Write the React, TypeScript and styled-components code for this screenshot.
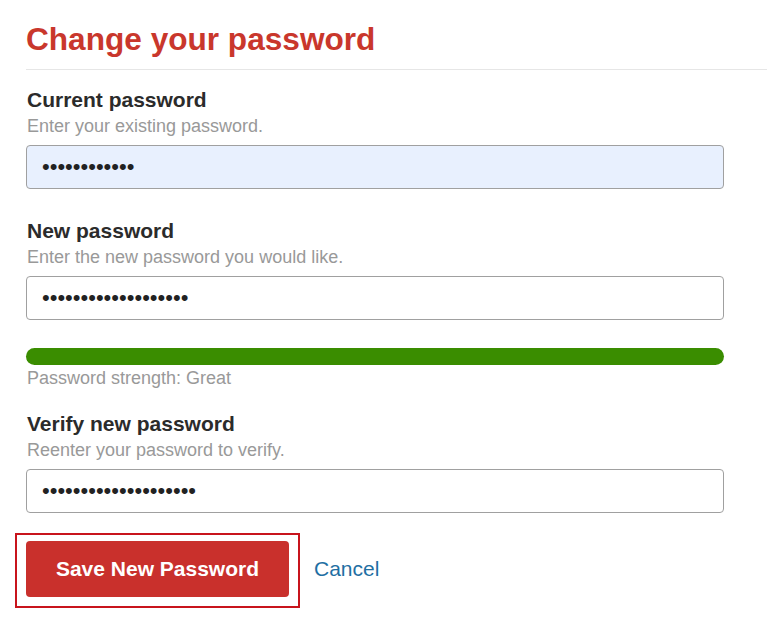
import React from 'react';
import styled, { createGlobalStyle } from 'styled-components';

const GlobalStyle = createGlobalStyle`
  body {
    margin: 0;
    background: #fff;
    font-family: 'Liberation Sans', Arial, sans-serif;
  }
`;

const Page = styled.div`
  padding: 21px 0 0 26px;
`;

const Title = styled.h1`
  margin: 0;
  padding: 0 0 12px 0;
  font-size: 31.6px;
  line-height: 36px;
  font-weight: 700;
  color: #c9372c;
  border-bottom: 1px solid #e6e6e6;
`;

const Form = styled.form`
  padding-right: 43px;
  margin-top: 18px;
`;

const Field = styled.div<{ $gap?: number }>`
  margin-bottom: ${({ $gap }) => ($gap ?? 30)}px;
`;

const Label = styled.label`
  display: block;
  font-size: 21px;
  line-height: 24px;
  font-weight: 700;
  color: #2b2b2b;
  padding-left: 1px;
`;

const Hint = styled.div`
  font-size: 18px;
  line-height: 22px;
  color: #999;
  margin: 3px 0 8px;
  padding-left: 1px;
`;

const Input = styled.input<{ $filled?: boolean }>`
  display: block;
  box-sizing: border-box;
  width: 100%;
  height: 44px;
  padding: 0 15px;
  border: 1px solid #a0a0a0;
  border-radius: 4px;
  background: ${({ $filled }) => ($filled ? '#e8f0fe' : '#fff')};
  font-family: 'Liberation Sans', Arial, sans-serif;
  font-size: 22px;
  color: #222;
  outline: none;
`;

const StrengthBar = styled.div`
  height: 17px;
  border-radius: 9px;
  background: #3a8d00;
`;

const StrengthText = styled.div`
  font-size: 18px;
  line-height: 22px;
  color: #999;
  margin: 2px 0 23px 1px;
`;

const Actions = styled.div`
  display: flex;
  align-items: center;
  gap: 14px;
  margin: 20px 0 0 -11px;
`;

const FocusRing = styled.div`
  border: 2px solid #c8141c;
  padding: 6px 9px 9px;
`;

const SaveButton = styled.button`
  display: block;
  height: 56px;
  width: 263px;
  border: none;
  border-radius: 4px;
  background: #c9302c;
  color: #fff;
  font-family: 'Liberation Sans', Arial, sans-serif;
  font-size: 21px;
  font-weight: 700;
  cursor: pointer;
`;

const CancelLink = styled.a`
  font-size: 21px;
  color: #1f6fa3;
  text-decoration: none;
  margin-bottom: 4px;
`;

export default function App() {
  return (
    <>
      <GlobalStyle />
      <Page>
        <Title>Change your password</Title>
        <Form onSubmit={(e) => e.preventDefault()}>
          <Field>
            <Label>Current password</Label>
            <Hint>Enter your existing password.</Hint>
            <Input type="password" $filled readOnly value="oldpassword1" />
          </Field>
          <Field $gap={28}>
            <Label>New password</Label>
            <Hint>Enter the new password you would like.</Hint>
            <Input type="password" readOnly value="newpassword12345678" />
          </Field>
          <StrengthBar />
          <StrengthText>Password strength: Great</StrengthText>
          <Field $gap={0}>
            <Label>Verify new password</Label>
            <Hint>Reenter your password to verify.</Hint>
            <Input type="password" readOnly value="newpassword123456789" />
          </Field>
          <Actions>
            <FocusRing>
              <SaveButton type="submit">Save New Password</SaveButton>
            </FocusRing>
            <CancelLink href="#">Cancel</CancelLink>
          </Actions>
        </Form>
      </Page>
    </>
  );
}
